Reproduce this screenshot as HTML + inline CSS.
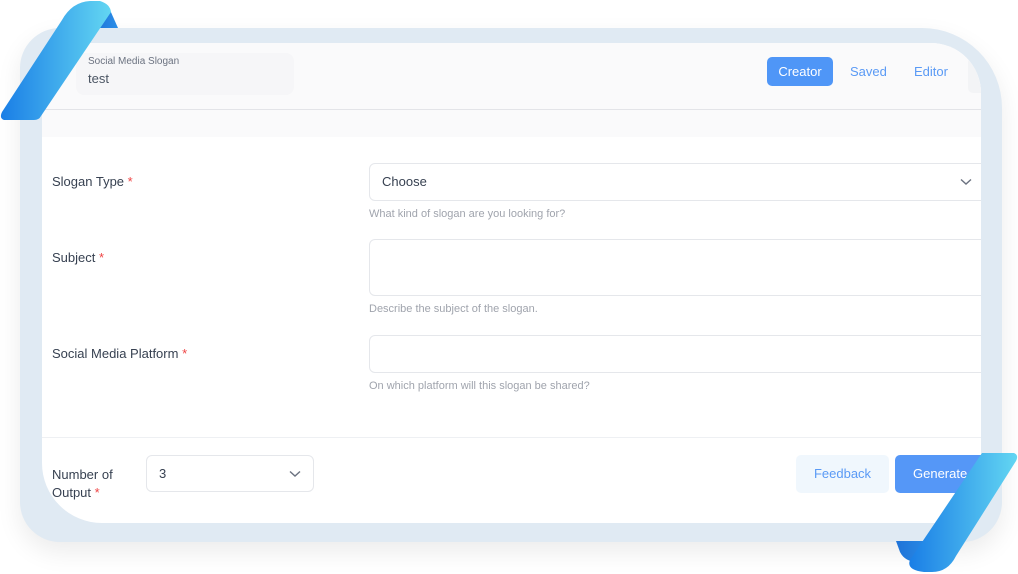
<!DOCTYPE html>
<html><head><meta charset="utf-8"><style>
*{box-sizing:border-box;margin:0;padding:0}
body{width:1018px;height:574px;background:#fff;position:relative;overflow:hidden;font-family:"Liberation Sans",sans-serif;color:#374151}
.frame{position:absolute;left:20px;top:28px;width:982px;height:514px;background:#e0eaf3;border-radius:40px 80px 40px 40px;box-shadow:0 10px 25px rgba(0,0,0,.08)}
.panel{position:absolute;left:42px;top:43px;width:939px;height:480px;background:#fff;border-radius:30px 50px 30px 60px;overflow:hidden}
.head{position:absolute;left:0;top:0;width:100%;height:94px;background:#fafafb}
.hline{position:absolute;left:0;top:66px;width:100%;height:1px;background:#e3e4e8}
.ttl{position:absolute;left:34px;top:10px;width:218px;height:42px;background:#f6f6f8;border-radius:8px}
.abs{position:absolute;white-space:nowrap}
.lbl{font-size:13px;color:#374151}
.req{color:#ef4444}
.field{position:absolute;left:327px;width:640px;border:1px solid #e5e7eb;border-radius:6px;background:#fff}
.hint{font-size:11px;color:#a0a4ad}
</style></head><body>
<div class="frame"></div>
<div class="panel">
 <div class="head"></div>
 <div class="hline"></div>
 <div class="ttl"></div>
 <div class="abs" style="left:46px;top:13px;font-size:10px;color:#6b7280">Social Media Slogan</div>
 <div class="abs" style="left:46px;top:28px;font-size:13px;color:#4b5563">test</div>
 <div class="abs" style="left:725px;top:14px;width:66px;height:29px;background:#4f96f7;border-radius:5px;color:#fff;font-size:13px;text-align:center;line-height:29px">Creator</div>
 <div class="abs" style="left:808px;top:21px;font-size:13px;color:#5a9af5">Saved</div>
 <div class="abs" style="left:872px;top:21px;font-size:13px;color:#5a9af5">Editor</div>
 <div class="abs" style="left:926px;top:14px;width:20px;height:36px;background:#f3f4f6;border-radius:5px"></div>

 <div class="abs lbl" style="left:10px;top:131px">Slogan Type <span class="req">*</span></div>
 <div class="field" style="top:120px;height:38px"><span class="abs" style="left:12px;top:10px;font-size:13px">Choose</span>
  <svg class="abs" style="left:590px;top:14px" width="12" height="8" viewBox="0 0 12 8"><path d="M1 1.5l5 4.5 5-4.5" fill="none" stroke="#6b7280" stroke-width="1.4"/></svg></div>
 <div class="abs hint" style="left:327px;top:165px">What kind of slogan are you looking for?</div>

 <div class="abs lbl" style="left:10px;top:207px">Subject <span class="req">*</span></div>
 <div class="field" style="top:196px;height:57px"></div>
 <div class="abs hint" style="left:327px;top:260px">Describe the subject of the slogan.</div>

 <div class="abs lbl" style="left:10px;top:303px">Social Media Platform <span class="req">*</span></div>
 <div class="field" style="top:292px;height:38px"></div>
 <div class="abs hint" style="left:327px;top:337px">On which platform will this slogan be shared?</div>

 <div class="abs" style="left:0;top:394px;width:100%;height:1px;background:#eef0f3"></div>
 <div class="abs lbl" style="left:10px;top:423px;line-height:18px">Number of<br>Output <span class="req">*</span></div>
 <div class="abs" style="left:104px;top:412px;width:168px;height:37px;border:1px solid #e5e7eb;border-radius:6px"><span class="abs" style="left:12px;top:10px;font-size:13px">3</span>
  <svg class="abs" style="left:142px;top:14px" width="12" height="8" viewBox="0 0 12 8"><path d="M1 1.5l5 4.5 5-4.5" fill="none" stroke="#6b7280" stroke-width="1.4"/></svg></div>
 <div class="abs" style="left:754px;top:412px;width:93px;height:38px;background:#f0f7fd;border-radius:5px;color:#5a9af5;font-size:13px;text-align:center;line-height:38px">Feedback</div>
 <div class="abs" style="left:853px;top:412px;width:100px;height:38px;background:#5597f7;border-radius:5px;color:#fff;font-size:13px;line-height:38px;padding-left:18px">Generate</div>
</div>
<svg class="abs" style="left:0;top:0" width="1018" height="574">
 <defs>
  <linearGradient id="g" x1="0" y1="0" x2="1" y2="0"><stop offset="0" stop-color="#1a7ee6"/><stop offset="1" stop-color="#63d6f2"/></linearGradient>
  <linearGradient id="g2" x1="0" y1="0" x2="1" y2="0"><stop offset="0" stop-color="#1f73d8"/><stop offset="1" stop-color="#2b8fe8"/></linearGradient>
 </defs>
 <path d="M95 14 L110 10 L118 28 L100 28 Z" fill="url(#g2)"/>
 <path d="M62 20 Q72 2 90 1 L100 1 Q110 4 111 12 L41 116 Q39 120 34 120 L4 120 Q-1 118 2 112 Z" fill="url(#g)"/>
 <path d="M896 541 L935 541 L918 562 Q905 562 900 552 Z" fill="url(#g2)"/>
 <path d="M982 453 L1014 453 Q1019 455 1016 461 L956 556 Q948 572 932 572 L924 572 Q906 570 910 560 Z" fill="url(#g)"/>
</svg>
</body></html>
